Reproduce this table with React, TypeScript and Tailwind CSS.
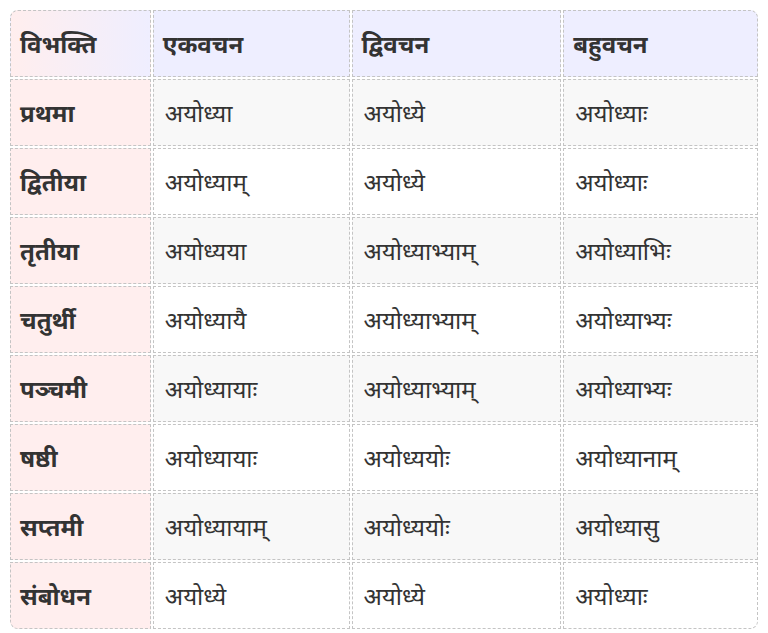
const headers = ['विभक्ति', 'एकवचन', 'द्विवचन', 'बहुवचन']

const rows: string[][] = [
  ['प्रथमा', 'अयोध्या', 'अयोध्ये', 'अयोध्याः'],
  ['द्वितीया', 'अयोध्याम्', 'अयोध्ये', 'अयोध्याः'],
  ['तृतीया', 'अयोध्यया', 'अयोध्याभ्याम्', 'अयोध्याभिः'],
  ['चतुर्थी', 'अयोध्यायै', 'अयोध्याभ्याम्', 'अयोध्याभ्यः'],
  ['पञ्चमी', 'अयोध्यायाः', 'अयोध्याभ्याम्', 'अयोध्याभ्यः'],
  ['षष्ठी', 'अयोध्यायाः', 'अयोध्ययोः', 'अयोध्यानाम्'],
  ['सप्तमी', 'अयोध्यायाम्', 'अयोध्ययोः', 'अयोध्यासु'],
  ['संबोधन', 'अयोध्ये', 'अयोध्ये', 'अयोध्याः'],
]

const widths = ['w-[141px]', 'w-[197px]', 'w-[210px]', 'w-[195px]']

export default function App() {
  const last = rows.length - 1
  return (
    <div className="bg-white p-2 font-['Noto_Sans','Noto_Sans_Devanagari',sans-serif] text-[24px] leading-none text-[#333]">
      <table className="border-separate border-spacing-[2px]">
        <thead>
          <tr>
            {headers.map((h, i) => (
              <th
                key={h}
                className={`h-[67px] border border-dashed border-[#c4c4c4] px-[9px] text-left align-middle font-bold ${widths[i]} ${
                  i === 0
                    ? 'rounded-tl-lg bg-gradient-to-r from-[#ffeeee] to-[#efeeff]'
                    : 'bg-[#eeeeff]'
                } ${i === 3 ? 'rounded-tr-lg' : ''}`}
              >
                {h}
              </th>
            ))}
          </tr>
        </thead>
        <tbody>
          {rows.map((r, ri) => (
            <tr key={r[0]}>
              {r.map((c, ci) => (
                <td
                  key={ci}
                  className={`h-[67px] border border-dashed border-[#c4c4c4] align-middle ${
                    ci === 0
                      ? 'bg-[#ffeeee] px-[9px] font-bold'
                      : ri % 2 === 0
                        ? 'bg-[#f8f8f8] px-[11px]'
                        : 'bg-white px-[11px]'
                  } ${ri === last && ci === 0 ? 'rounded-bl-lg' : ''} ${
                    ri === last && ci === 3 ? 'rounded-br-lg' : ''
                  }`}
                >
                  {c}
                </td>
              ))}
            </tr>
          ))}
        </tbody>
      </table>
    </div>
  )
}
